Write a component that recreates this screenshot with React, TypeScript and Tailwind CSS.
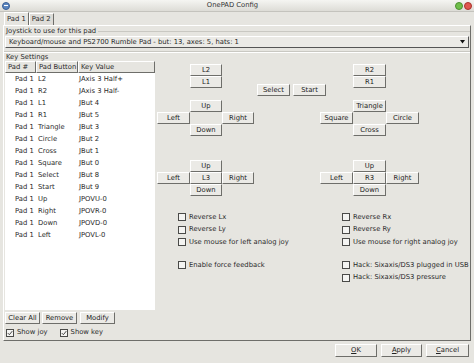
import React from "react";

const btn =
  "flex items-center justify-center whitespace-nowrap bg-[#ebeae6] border border-t-white border-l-white border-b-[#6e6e6a] border-r-[#6e6e6a] text-[#222] leading-none";

function Check({ checked }: { checked?: boolean }) {
  return (
    <span className="w-[8px] h-[8px] border border-[#4a4a48] bg-[#f4f4f2] flex items-center justify-center shrink-0">
      {checked && (
        <svg width="6" height="6" viewBox="0 0 6 6">
          <path d="M0.8 3.1 L2.4 4.7 L5.3 1.1" stroke="#333" strokeWidth="0.9" fill="none" />
        </svg>
      )}
    </span>
  );
}

function CB({ label, checked }: { label: string; checked?: boolean }) {
  return (
    <div className="flex items-center gap-[3px] h-full whitespace-nowrap">
      <Check checked={checked} />
      <span>{label}</span>
    </div>
  );
}

const rows: [string, string][] = [
  ["L2", "JAxis 3 Half+"],
  ["R2", "JAxis 3 Half-"],
  ["L1", "JBut 4"],
  ["R1", "JBut 5"],
  ["Triangle", "JBut 3"],
  ["Circle", "JBut 2"],
  ["Cross", "JBut 1"],
  ["Square", "JBut 0"],
  ["Select", "JBut 8"],
  ["Start", "JBut 9"],
  ["Up", "JPOVU-0"],
  ["Right", "JPOVR-0"],
  ["Down", "JPOVD-0"],
  ["Left", "JPOVL-0"],
];

const hdr =
  "flex items-center pl-[2px] whitespace-nowrap border border-t-white border-l-white border-b-[#6e6e6a] border-r-[#6e6e6a]";

export default function App() {
  return (
    <div className="w-[474px] h-[363px] bg-[#e6e5e0] flex flex-col text-[6.8px] leading-none text-[#2a2a2a] font-['DejaVu_Sans',sans-serif] overflow-hidden">
      {/* Title bar */}
      <div className="h-[12px] flex items-center bg-gradient-to-b from-[#f5f5f2] to-[#dddcd6] border-b border-[#c4c3bd]">
        <span className="ml-[2px] w-[8px] h-[8px] rounded-full bg-[#5b86c0] border border-[#3c5f94] flex items-center justify-center">
          <span className="w-[4px] h-[2px] border-t border-white" />
        </span>
        <span className="flex-1 text-center text-[#333]">OnePAD Config</span>
        <span className="flex gap-[1px] mr-[2px]">
          <span className="w-[8px] h-[8px] rounded-full bg-[#6fbf4a] border border-[#4c8f30]" />
          <span className="w-[8px] h-[8px] rounded-full bg-[#e0574f] border border-[#a8332c]" />
        </span>
      </div>

      {/* Tabs */}
      <div className="h-[13px] flex items-end pl-[4px]">
        <div className="h-[13px] px-[2px] flex items-center border border-b-0 border-t-white border-l-white border-r-[#6e6e6a] bg-[#e6e5e0]">Pad 1</div>
        <div className="h-[12px] px-[2px] flex items-center border border-b-0 border-t-white border-l-white border-r-[#6e6e6a] bg-[#dedcd7]">Pad 2</div>
      </div>

      {/* Panel */}
      <div className="mx-[3px] h-[316px] border border-t-white border-l-white border-b-[#6e6e6a] border-r-[#6e6e6a] flex flex-col">
        <div className="h-[10px] flex items-center pl-[2px] gap-[2px] whitespace-nowrap">
          <span>Joystick to use for this pad</span>
          <span className="flex-1 border-t border-[#c9c8c2] mt-[1px]" />
        </div>
        <div className="mx-[1px] h-[12px] flex items-center justify-between pl-[3px] pr-[3px] bg-[#ebeae6] border border-t-white border-l-white border-b-[#555] border-r-[#555] whitespace-nowrap">
          <span>Keyboard/mouse and PS2700 Rumble Pad - but: 13, axes: 5, hats: 1</span>
          <svg width="5" height="4" viewBox="0 0 5 4">
            <path d="M0 0 H5 L2.5 3.5 Z" fill="#111" />
          </svg>
        </div>
        <div className="mt-[3px] border-t border-[#c9c8c2] border-b border-b-white" />

        <div className="h-[8px] flex items-center pl-[2px]">Key Settings</div>
        <div className="flex">
          <div className="ml-[1px] w-[150px] flex flex-col">
            <div className="h-[12px] flex">
              <div className={`${hdr} w-[31px]`}>Pad #</div>
              <div className={`${hdr} w-[42px]`}>Pad Button</div>
              <div className={`${hdr} flex-1`}>Key Value</div>
            </div>
            <div className="h-[237px] bg-white flex flex-col">
              {rows.map(([b, v]) => (
                <div key={b} className="h-[12px] flex items-center whitespace-nowrap">
                  <span className="w-[33px] pl-[10px]">Pad 1</span>
                  <span className="w-[41px]">{b}</span>
                  <span>{v}</span>
                </div>
              ))}
            </div>
            <div className="mt-[2px] h-[12px] flex gap-[2px]">
              <div className={`${btn} w-[35px]`}>Clear All</div>
              <div className={`${btn} w-[35px]`}>Remove</div>
              <div className={`${btn} w-[35px] ml-[1px]`}>Modify</div>
            </div>
            <div className="h-[11px] mt-[3px] flex items-center pl-[1px] gap-[12px]">
              <CB label="Show joy" checked />
              <CB label="Show key" checked />
            </div>
          </div>

          <div className="ml-[2px] flex-1 flex flex-col">
            <div className="mt-[3px] grid grid-cols-[33px_32px_32px_3px_33px_3px_27px_6px_27px_33px_33px] grid-rows-[12px_8px_4px_8px_4px_12px_12px_12px_24px_12px_12px_12px]">
              <div className={`${btn} col-start-2 row-start-1`}>L2</div>
              <div className={`${btn} col-start-2 row-start-2 row-end-4`}>L1</div>
              <div className={`${btn} col-start-5 row-start-3 row-end-5`}>Select</div>
              <div className={`${btn} col-start-7 col-end-9 row-start-3 row-end-5`}>Start</div>
              <div className={`${btn} col-start-10 row-start-1`}>R2</div>
              <div className={`${btn} col-start-10 row-start-2 row-end-4`}>R1</div>

              <div className={`${btn} col-start-2 row-start-6`}>Up</div>
              <div className={`${btn} col-start-1 row-start-7`}>Left</div>
              <div className={`${btn} col-start-3 row-start-7`}>Right</div>
              <div className={`${btn} col-start-2 row-start-8`}>Down</div>

              <div className={`${btn} col-start-10 row-start-6`}>Triangle</div>
              <div className={`${btn} col-start-8 col-end-10 row-start-7`}>Square</div>
              <div className={`${btn} col-start-11 row-start-7`}>Circle</div>
              <div className={`${btn} col-start-10 row-start-8`}>Cross</div>

              <div className={`${btn} col-start-2 row-start-10`}>Up</div>
              <div className={`${btn} col-start-1 row-start-11`}>Left</div>
              <div className={`${btn} col-start-2 row-start-11`}>L3</div>
              <div className={`${btn} col-start-3 row-start-11`}>Right</div>
              <div className={`${btn} col-start-2 row-start-12`}>Down</div>

              <div className={`${btn} col-start-10 row-start-10`}>Up</div>
              <div className={`${btn} col-start-8 col-end-10 row-start-11`}>Left</div>
              <div className={`${btn} col-start-10 row-start-11`}>R3</div>
              <div className={`${btn} col-start-11 row-start-11`}>Right</div>
              <div className={`${btn} col-start-10 row-start-12`}>Down</div>
            </div>

            <div className="mt-[15px] pl-[21px] grid grid-cols-[164px_1fr] grid-rows-[12.5px_12.5px_12.5px_10.5px_12.5px_12.5px]">
              <CB label="Reverse Lx" />
              <CB label="Reverse Rx" />
              <CB label="Reverse Ly" />
              <CB label="Reverse Ry" />
              <CB label="Use mouse for left analog joy" />
              <CB label="Use mouse for right analog joy" />
              <div />
              <div />
              <CB label="Enable force feedback" />
              <CB label="Hack: Sixaxis/DS3 plugged in USB" />
              <div />
              <CB label="Hack: Sixaxis/DS3 pressure" />
            </div>
          </div>
        </div>
      </div>

      <div className="flex justify-end gap-[4px] pr-[5px] mt-[3px]">
        <div className={`${btn} w-[42px] h-[13px]`}>
          <span><span className="underline">O</span>K</span>
        </div>
        <div className={`${btn} w-[41px] h-[13px]`}>
          <span><span className="underline">A</span>pply</span>
        </div>
        <div className={`${btn} w-[43px] h-[13px]`}>
          <span><span className="underline">C</span>ancel</span>
        </div>
      </div>
    </div>
  );
}
